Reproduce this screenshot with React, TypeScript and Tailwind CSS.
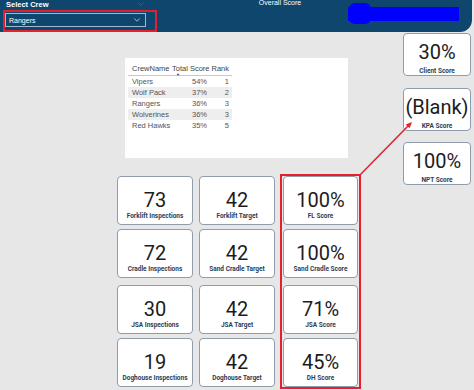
import { ChevronDown } from "lucide-react";

const CREWS = [
  { name: "Vipers", score: "54%", rank: "1" },
  { name: "Wolf Pack", score: "37%", rank: "2" },
  { name: "Rangers", score: "36%", rank: "3" },
  { name: "Wolverines", score: "36%", rank: "3" },
  { name: "Red Hawks", score: "35%", rank: "5" },
];

const COUNTS = [
  [
    { value: "73", label: "Forklift Inspections" },
    { value: "72", label: "Cradle Inspections" },
    { value: "30", label: "JSA Inspections" },
    { value: "19", label: "Doghouse Inspections" },
  ],
  [
    { value: "42", label: "Forklift Target" },
    { value: "42", label: "Sand Cradle Target" },
    { value: "42", label: "JSA Target" },
    { value: "42", label: "Doghouse Target" },
  ],
];

const SCORES = [
  { value: "100%", label: "FL Score" },
  { value: "100%", label: "Sand Cradle Score" },
  { value: "71%", label: "JSA Score" },
  { value: "45%", label: "DH Score" },
];

const SIDE = [
  { value: "30%", label: "Client Score", gap: "mt-[1px]" },
  { value: "(Blank)", label: "KPA Score", gap: "mt-[12px]" },
  { value: "100%", label: "NPT Score", gap: "mt-[11px]" },
];

// row offsets so the four rows land where the report puts them
const ROW_GAP = ["", "mt-[4px]", "mt-[7px]", "mt-[4px]"];

function Card({ value, label, className = "" }: { value: string; label: string; className?: string }) {
  return (
    <div className={`flex flex-col items-center rounded-[4px] border border-[#8f9cab] bg-white ${className}`}>
      <div className="mt-[13px] font-['Roboto',sans-serif] text-[20px] leading-[20px] text-[#1c1c1c]">{value}</div>
      <div className="mt-[2px] whitespace-nowrap font-['Roboto',sans-serif] text-[6.5px] font-bold leading-[8px] text-[#2c4057]">
        {label}
      </div>
    </div>
  );
}

function SideCard({ value, label, className = "" }: { value: string; label: string; className?: string }) {
  return (
    <div className={`flex h-[43px] flex-col items-center rounded-[4px] border border-[#8f9cab] bg-white ${className}`}>
      <div className="mt-[8px] font-['Roboto',sans-serif] text-[20px] leading-[20px] text-[#1c1c1c]">{value}</div>
      <div className="mt-[5px] whitespace-nowrap font-['Roboto',sans-serif] text-[6.5px] font-bold leading-[8px] text-[#2c4057]">
        {label}
      </div>
    </div>
  );
}

function CrewTable() {
  return (
    <div className="ml-[8px] mt-[26px] h-[100px] w-[223px] bg-white pl-[3px] pt-[4px] font-['Liberation_Sans',sans-serif] text-[7.5px] leading-none text-[#555]">
      {/* header */}
      <div className="flex h-[14px] w-[104px] items-center border-b border-[#b3cfe6] text-[#444]">
        <div className="w-[44px] pl-[4px]">CrewName</div>
        <div className="relative w-[35px] whitespace-nowrap text-right">
          Total Score
          <span className="absolute left-[4px] top-[8px] text-[4px] text-[#333]">▼</span>
        </div>
        <div className="w-[22px] text-right">Rank</div>
      </div>
      {CREWS.map((c, i) => (
        <div key={c.name} className={`flex h-[11px] w-[104px] items-center ${i % 2 === 1 ? "bg-[#eeeeee]" : ""}`}>
          <div className="w-[44px] pl-[4px]">{c.name}</div>
          <div className="w-[35px] text-right">{c.score}</div>
          <div className="w-[22px] text-right">{c.rank}</div>
        </div>
      ))}
    </div>
  );
}

export default function App() {
  return (
    <div className="relative h-[390px] w-[474px] overflow-hidden bg-[#e7e7e7] font-['Liberation_Sans',sans-serif]">
      {/* Header band */}
      <header className="flex h-[32px] w-[472px] items-start rounded-br-[12px] bg-[#0e466e]">
        <div className="ml-[3px] flex flex-col">
          <div className="flex h-[10px] items-center justify-between pr-[13px]">
            <span className="ml-[3px] text-[7.5px] font-bold leading-none text-white">Select Crew</span>
            <svg width="7" height="4" viewBox="0 0 7 4" className="mb-[2px]">
              <path d="M0.5 0.5 L3.5 3.5 L6.5 0.5" fill="none" stroke="#3d6b8f" strokeWidth="0.8" />
            </svg>
          </div>
          <div className="h-[22px] w-[154px] border-2 border-[#e3202c]">
            <div className="mt-[1px] flex h-[14px] w-[141px] items-center border border-[#9fbad0] pl-[3px] pr-[3px]">
              <span className="text-[7px] leading-none text-white">Rangers</span>
              <ChevronDown size={10} strokeWidth={1.5} className="ml-auto text-white" />
            </div>
          </div>
        </div>
        <div className="-mt-[1px] ml-[93px] w-[60px] text-center text-[7px] leading-[8px] text-white">Overall Score</div>
        <svg width="112" height="24" viewBox="0 0 112 24" className="ml-[38px] mt-[2px]">
          <rect x="0" y="5" width="111" height="14" fill="#0000ff" />
          <rect x="1" y="1" width="22" height="21" rx="6" fill="#0000ff" />
        </svg>
      </header>

      <div className="flex">
        {/* centre: table + card grid */}
        <div className="ml-[117px] flex w-[244px] flex-col">
          <CrewTable />

          <div className="mt-[16px] flex items-start">
            {COUNTS.map((col, ci) => (
              <div key={ci} className={`mt-[2px] flex w-[76px] flex-col ${ci === 1 ? "ml-[6px]" : ""}`}>
                {col.map((c, i) => (
                  <Card key={c.label} value={c.value} label={c.label} className={`h-[49px] ${ROW_GAP[i]}`} />
                ))}
              </div>
            ))}
            <div className="ml-[5px] flex h-[215px] w-[81px] flex-col border-2 border-[#e3202c] px-[1px]">
              {SCORES.map((c, i) => (
                <Card key={c.label} value={c.value} label={c.label} className={`h-[49px] ${ROW_GAP[i]}`} />
              ))}
            </div>
          </div>
        </div>

        {/* right column */}
        <div className="ml-[42px] flex w-[68px] flex-col">
          {SIDE.map((c) => (
            <SideCard key={c.label} value={c.value} label={c.label} className={c.gap} />
          ))}
        </div>
      </div>

      {/* annotation arrow */}
      <svg className="pointer-events-none absolute left-0 top-0" width="474" height="390" viewBox="0 0 474 390">
        <line x1="360" y1="175" x2="409" y2="125" stroke="#e3202c" strokeWidth="1.5" />
        <polygon points="412,122 409.6,128.2 405.8,124.6" fill="#e3202c" />
      </svg>
    </div>
  );
}
